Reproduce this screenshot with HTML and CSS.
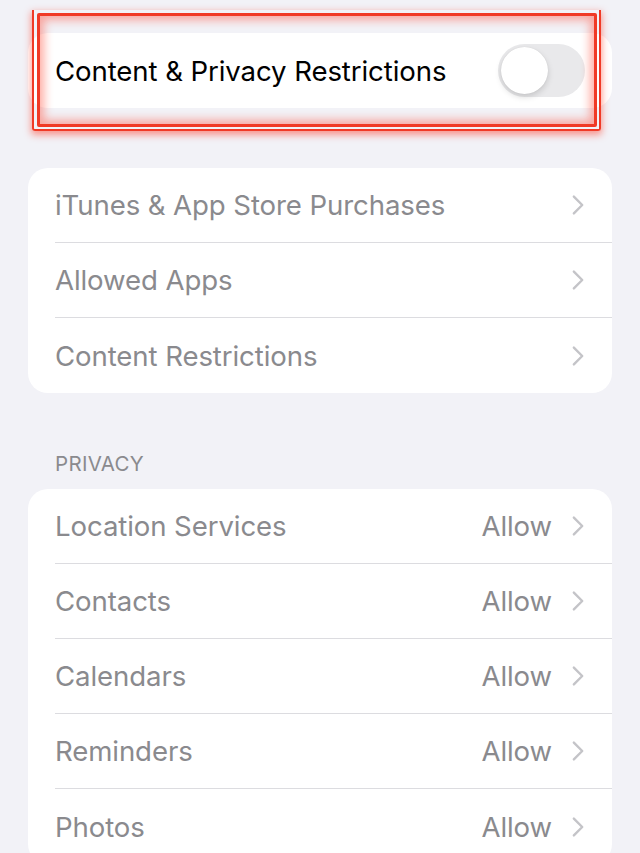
FILE: index.html
```html
<!DOCTYPE html>
<html>
<head>
<meta charset="utf-8">
<link rel="stylesheet" href="styles.css">
</head>
<body>
<div class="page">
  <div class="card top-card">
    <div class="row">
      <span class="label dark">Content &amp; Privacy Restrictions</span>
      <span class="toggle"><span class="knob"></span></span>
    </div>
  </div>

  <div class="card group">
    <div class="row"><span class="label">iTunes &amp; App Store Purchases</span><span class="right"><svg class="chev" viewBox="0 0 14 22"><path d="M2 2 L11 11 L2 20" /></svg></span></div>
    <div class="row"><span class="label">Allowed Apps</span><span class="right"><svg class="chev" viewBox="0 0 14 22"><path d="M2 2 L11 11 L2 20" /></svg></span></div>
    <div class="row"><span class="label">Content Restrictions</span><span class="right"><svg class="chev" viewBox="0 0 14 22"><path d="M2 2 L11 11 L2 20" /></svg></span></div>
  </div>

  <div class="section-header">PRIVACY</div>
  <div class="card group">
    <div class="row"><span class="label">Location Services</span><span class="right"><span class="value">Allow</span><svg class="chev" viewBox="0 0 14 22"><path d="M2 2 L11 11 L2 20" /></svg></span></div>
    <div class="row"><span class="label">Contacts</span><span class="right"><span class="value">Allow</span><svg class="chev" viewBox="0 0 14 22"><path d="M2 2 L11 11 L2 20" /></svg></span></div>
    <div class="row"><span class="label">Calendars</span><span class="right"><span class="value">Allow</span><svg class="chev" viewBox="0 0 14 22"><path d="M2 2 L11 11 L2 20" /></svg></span></div>
    <div class="row"><span class="label">Reminders</span><span class="right"><span class="value">Allow</span><svg class="chev" viewBox="0 0 14 22"><path d="M2 2 L11 11 L2 20" /></svg></span></div>
    <div class="row"><span class="label">Photos</span><span class="right"><span class="value">Allow</span><svg class="chev" viewBox="0 0 14 22"><path d="M2 2 L11 11 L2 20" /></svg></span></div>
  </div>
</div>
<div class="highlight"><div class="highlight-inner"></div></div>
</body>
</html>
```
FILE: styles.css
```css
html, body {
  margin: 0;
  padding: 0;
  background: #f2f2f7;
  height: 853px;
  overflow: hidden;
}
body {
  font-family: Inter, "Liberation Sans", sans-serif;
  position: relative;
}
.page {
  padding: 33px 28px 0 28px;
}
.card {
  background: #ffffff;
  border-radius: 20px;
}
.top-card {
  margin-bottom: 60px;
}
.row {
  height: 75px;
  margin-left: 27px;
  padding-right: 27px;
  display: flex;
  align-items: center;
  justify-content: space-between;
  border-bottom: 1.5px solid #dcdce0;
  box-sizing: border-box;
}
.row:last-child {
  border-bottom: none;
}
.label {
  font-size: 27.6px;
  color: #8a8a8e;
  letter-spacing: -0.1px;
}
.label.dark {
  color: #000000;
}
.right {
  display: flex;
  align-items: center;
  gap: 20px;
}
.value {
  font-size: 27.6px;
  color: #8a8a8e;
  letter-spacing: -0.1px;
}
.chev {
  width: 13px;
  height: 22px;
  fill: none;
  stroke: #c4c4c8;
  stroke-width: 2.6;
  stroke-linecap: round;
  stroke-linejoin: round;
}
.toggle {
  width: 87px;
  height: 53px;
  border-radius: 27px;
  background: #e9e9eb;
  position: relative;
  margin-right: 0;
}
.knob {
  position: absolute;
  left: 3px;
  top: 3px;
  width: 47px;
  height: 47px;
  border-radius: 50%;
  background: #ffffff;
  box-shadow: 0 3px 6px rgba(0,0,0,0.15), 0 0 1px rgba(0,0,0,0.12);
}
.section-header {
  margin-top: 59px;
  margin-left: 27px;
  height: 24px;
  line-height: 24px;
  font-size: 20.5px;
  letter-spacing: 0.3px;
  color: #8a8a8e;
  margin-bottom: 13px;
}
.highlight {
  position: absolute;
  left: 32px;
  top: 10px;
  width: 569px;
  height: 121px;
  box-sizing: border-box;
  border: 2.5px solid #f03a26;
  border-top: none;
  border-radius: 0 0 3px 3px;
  box-shadow: 0 3px 7px 1px rgba(255, 60, 40, 0.5);
}
.highlight-inner {
  position: absolute;
  left: 2.5px;
  top: 3px;
  right: 2.5px;
  bottom: 2.5px;
  border: 3px solid #f03a26;
  border-radius: 2px;
  box-shadow: inset 0 0 10px 4px rgba(255, 70, 50, 0.45);
}
```
